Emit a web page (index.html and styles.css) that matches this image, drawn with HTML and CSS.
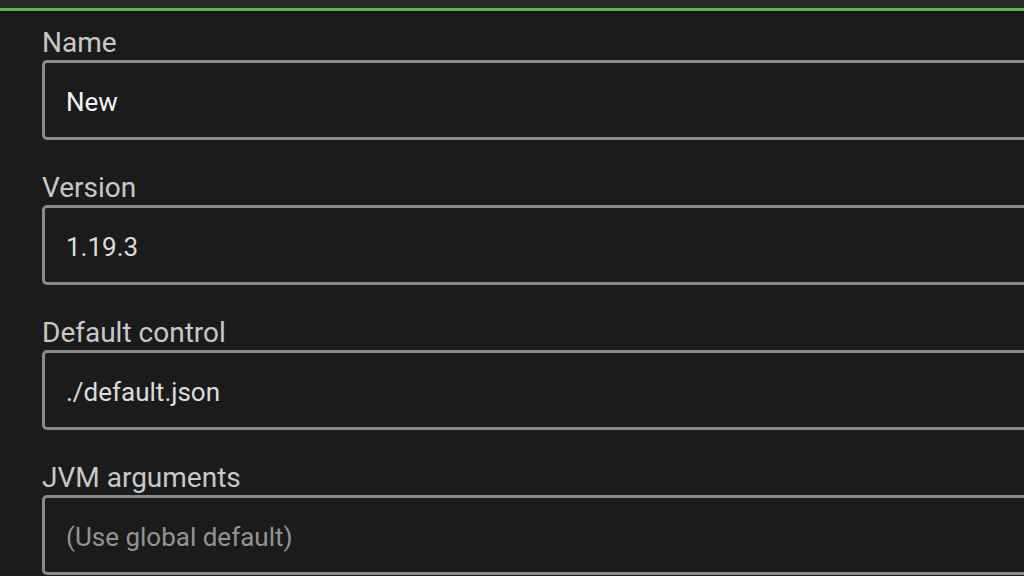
FILE: index.html
```html
<!DOCTYPE html>
<html>
<head>
<meta charset="utf-8">
<link rel="stylesheet" href="styles.css">
</head>
<body>
<div class="topbar"></div>
<div class="accent"></div>
<form class="form">
  <div class="field">
    <label class="label">Name</label>
    <div class="box"><span class="value value-strong">New</span></div>
  </div>
  <div class="field">
    <label class="label">Version</label>
    <div class="box"><span class="value">1.19.3</span></div>
  </div>
  <div class="field">
    <label class="label">Default control</label>
    <div class="box"><span class="value">./default.json</span></div>
  </div>
  <div class="field">
    <label class="label">JVM arguments</label>
    <div class="box"><span class="value placeholder">(Use global default)</span></div>
  </div>
</form>
</body>
</html>
```
FILE: styles.css
```css
html, body {
  margin: 0;
  padding: 0;
  background: #1b1b1b;
  overflow: hidden;
  font-family: Roboto, "Noto Sans", sans-serif;
}
.topbar {
  height: 8px;
  background: #282828;
}
.accent {
  height: 3px;
  background: #5cbb3e;
  box-shadow: 0 1px 3px rgba(0,0,0,0.6);
}
.form {
  padding: 17px 0 0 42px;
  display: flex;
  flex-direction: column;
  gap: 33px;
  overflow: hidden;
}
.field {
  display: flex;
  flex-direction: column;
}
.label {
  font-size: 28px;
  line-height: 30px;
  color: #c8c8c8;
  margin-bottom: 2px;
}
.box {
  box-sizing: border-box;
  height: 80px;
  margin-right: -20px;
  border: 3px solid #8a8a8a;
  border-radius: 5px;
  display: flex;
  align-items: center;
  padding: 3px 0 0 21px;
}
.value {
  font-size: 26px;
  color: #dcdcdc;
}
.value-strong {
  color: #f4f4f4;
}
.placeholder {
  color: #939393;
}
```
